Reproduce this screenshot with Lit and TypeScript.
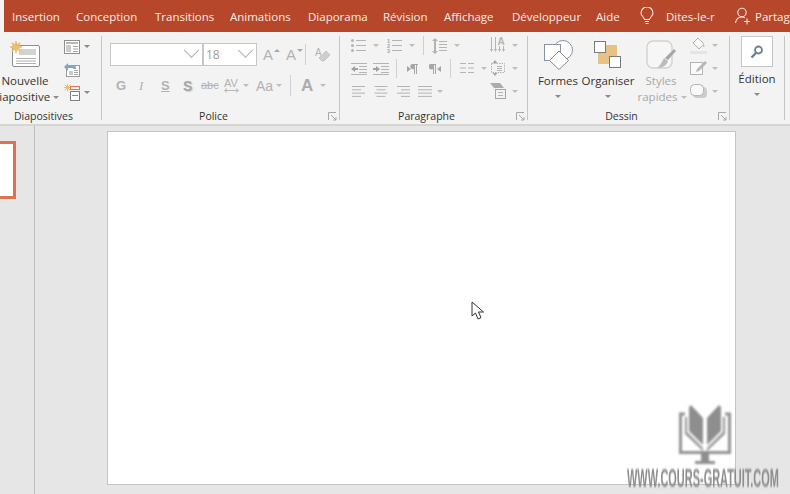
import { LitElement, html, svg, css } from "lit";
import { customElement } from "lit/decorators.js";

const G = "#b4b4b4";
const D = "#a6a6a6";

const caret = () => html`<span class="caret"></span>`;

const lines = (x: number, y: number, w: number, n: number, step: number, c = G) =>
  Array.from({ length: n }, (_, i) => svg`<rect x=${x} y=${y + i * step} width=${w} height="1" fill=${c}></rect>`);

const sun = (x: number, y: number, r: number, sw = 1.6) => svg`
  <g stroke="#ecbd6e" stroke-width=${sw} fill="none">
    <circle cx=${x} cy=${y} r=${r}></circle>
    ${[0, 45, 90, 135].map(a => svg`<line x1=${x - (r + 3) * Math.cos(a * Math.PI / 180)} y1=${y - (r + 3) * Math.sin(a * Math.PI / 180)}
      x2=${x + (r + 3) * Math.cos(a * Math.PI / 180)} y2=${y + (r + 3) * Math.sin(a * Math.PI / 180)}></line>`)}
  </g>`;

const newSlide = html`<svg width="30" height="27" viewBox="0 0 30 27">
  <rect x="2.5" y="4.5" width="27" height="21" rx="1.5" fill="#fff" stroke="#8f8f8f"></rect>
  <rect x="9" y="8" width="17" height="6" fill="#d2d2d2"></rect>
  ${lines(6, 17, 20, 3, 2.5, "#b0b0b0")}
  ${sun(6, 6, 3)}
</svg>`;

const layoutIcon = html`<svg width="16" height="14" viewBox="0 0 16 14">
  <rect x=".5" y=".5" width="15" height="13" fill="#fff" stroke="#8f8f8f"></rect>
  <rect x="2" y="2" width="12" height="2" fill="#b8b8b8"></rect>
  <rect x="2" y="5" width="5" height="7" fill="#cacaca"></rect>
  ${lines(9, 6, 5, 3, 2.5, "#a8a8a8")}
</svg>`;

const resetIcon = html`<svg width="16" height="15" viewBox="0 0 16 15">
  <rect x="2.5" y="3.5" width="13" height="11" fill="#fff" stroke="#9a9a9a"></rect>
  <rect x="5" y="9" width="4" height="4" fill="#cacaca"></rect>
  ${lines(10, 8, 4, 3, 2, "#a8a8a8")}
  <path d="M0 5l4-4v2h5a3 3 0 0 1 3 3v1H9V6H4v3z" fill="#85a5c6"></path>
</svg>`;

const sectionIcon = html`<svg width="16" height="17" viewBox="0 0 16 17">
  ${sun(3.5, 3.5, 1, 1)}
  <rect x="6.500" y="2.500" width="9" height="3" fill="none" stroke="#d8775a"></rect>
  <rect x="6.500" y="7.500" width="9" height="9" fill="#fff" stroke="#7f7f7f"></rect>
  <rect x="8" y="11" width="6" height="1" fill="#8a8a8a"></rect>
</svg>`;

const eraser = html`<svg width="16" height="16" viewBox="0 0 16 16">
  <text x="0" y="9" font-size="10" font-family="Liberation Sans" fill=${G}>A</text>
  <path d="M4 11l7-7 4 4-6 6H7z" fill="#cfcfcf" stroke="#c4c4c4"></path>
</svg>`;

const bullets = html`<svg width="15" height="14" viewBox="0 0 15 14">
  ${[1, 6, 11].map(y => svg`<circle cx="1.500" cy=${y + .5} r="1.500" fill=${G}></circle><rect x="5" y=${y} width="10" height="1" fill=${G}></rect>`)}
</svg>`;

const numbered = html`<svg width="15" height="15" viewBox="0 0 15 15">
  ${["1", "2", "3"].map((n, i) => svg`<text x="0" y=${4.5 + i * 5} font-size="5.500" font-family="Liberation Sans" font-weight="700" fill=${D}>${n}</text><rect x="5" y=${2 + i * 5} width="10" height="1" fill=${G}></rect>`)}
</svg>`;

const lineSpacing = html`<svg width="15" height="16" viewBox="0 0 15 16">
  <path d="M3 0l3 3H4v10h2l-3 3-3-3h2V3H0z" fill=${G}></path>
  ${lines(7, 3, 8, 4, 3)}
</svg>`;

const textDir = html`<svg width="16" height="16" viewBox="0 0 16 16">
  <path d="M1 0h1v12h1l-1.500 3L0 12h1zM5 0h1v12h1l-1.500 3L4 12h1zM9 9h1v3h1l-1.500 3L8 12h1zM13 9h1v3h1l-1.500 3L12 12h1z" fill=${G}></path>
  <text x="7.500" y="8" font-size="10" font-family="Liberation Sans" font-weight="700" fill=${G}>A</text>
</svg>`;

const indent = (flip: boolean) => html`<svg width="16" height="12" viewBox="0 0 16 12">
  ${lines(0, 0, 16, 1, 1)}
  ${lines(8, 3, 8, 3, 3)}
  <rect x="0" y="11" width="16" height="1" fill=${G}></rect>
  <path d=${flip ? "M7 6L3 3v2H0v2h3v2z" : "M0 6l4-3v2h3v2H4v2z"} fill="#a0a0a0"></path>
</svg>`;

const pilcrow = (flip: boolean) => html`<svg width="12" height="10" viewBox="0 0 12 10">
  <path d=${flip ? "M1 0h6v10H6V1H5v9H4V5a2.500 2.500 0 0 1-3-5zM8 5l4-3v6z" : "M5 0h6v1h-1v9H9V1H8v9H7V5a2.500 2.500 0 0 1-2-5zM0 2l4 3-4 3z"} fill=${D}></path>
</svg>`;

const columns = html`<svg width="14" height="11" viewBox="0 0 14 11">
  ${lines(0, 0, 6, 3, 4.500)}${lines(8, 0, 6, 3, 4.500)}
</svg>`;

const alignText = html`<svg width="16" height="16" viewBox="0 0 16 16">
  <rect x="1.500" y="3.500" width="13" height="9" fill="none" stroke=${G} stroke-dasharray="1.500 1"></rect>
  ${lines(7, 6, 5, 3, 2)}
  <path d="M5 0l2.500 3h-5zM5 16l2.500-3h-5z" fill=${D}></path>
</svg>`;

const smartArt = html`<svg width="16" height="16" viewBox="0 0 16 16">
  <path d="M0 0h10l4 5H4z" fill="#ababab"></path>
  <rect x="5.500" y="6.500" width="10" height="9" fill="#f3f3f3" stroke=${D}></rect>
  ${lines(8, 9, 5, 2, 3)}
</svg>`;

const align = (mode: string) => {
  const rows = [13, 9, 13, 9];
  return html`<svg width="14" height="11" viewBox="0 0 14 11">
    ${rows.map((w, i) => {
      const wd = mode === "j" ? 14 : w;
      const x = mode === "r" ? 14 - wd : mode === "c" ? (14 - wd) / 2 : 0;
      return svg`<rect x=${x} y=${i * 3.300} width=${wd} height="1" fill=${G}></rect>`;
    })}
  </svg>`;
};

const kerning = html`<svg width="15" height="5" viewBox="0 0 15 5">
  <path d="M.5 2.500h14M3 .5L.5 2.500 3 4.500M12 .5l2.500 2L12 4.500" fill="none" stroke="#b8b8b8"></path>
</svg>`;

const formes = html`<svg width="31" height="30" viewBox="0 0 31 30">
  <circle cx="20" cy="10" r="9.500" fill="#fff" stroke="#8a93a3"></circle>
  <rect x="1.500" y="4.500" width="16" height="16" fill="#fff" stroke="#8a93a3"></rect>
  <path d="M16 11l9.500 9.500-9.500 9-9.500-9z" fill="#fff" stroke="#858585"></path>
</svg>`;

const organiser = html`<svg width="28" height="28" viewBox="0 0 28 28">
  <rect x="4" y="4" width="19" height="19" fill="#e6c285"></rect>
  <rect x=".5" y=".5" width="11" height="11" fill="#fff" stroke="#7a7a7a"></rect>
  <rect x="15.500" y="15.500" width="11" height="11" fill="#fff" stroke="#7a7a7a"></rect>
</svg>`;

const styles = html`<svg width="30" height="30" viewBox="0 0 30 30">
  <rect x="1" y="1" width="25" height="27" rx="6" fill="#f6f6f6" stroke="#d2d2d2" stroke-width="1.400"></rect>
  <path d="M28 9l2 2-8 9-3-2z" fill="#a6a6a6"></path>
  <path d="M18 18l4 3c-1 4-5 7-11 7 3-2 5-6 7-10z" fill="#bcbcbc"></path>
</svg>`;

const fillIcon = html`<svg width="17" height="17" viewBox="0 0 17 17">
  <path d="M8 1l6 6-5 5-6-6z" fill="#fafafa" stroke="#b4b4b4"></path>
  <path d="M13 6l2 4h-2z" fill="#c8c8c8"></path>
  <rect x="0" y="14" width="17" height="3" fill="#e4e4e4"></rect>
</svg>`;

const penIcon = html`<svg width="17" height="15" viewBox="0 0 17 15">
  <rect x=".5" y="1.500" width="12" height="12" fill="#fafafa" stroke="#b4b4b4"></rect>
  <path d="M15 0l2 2-8 8-3 1 1-3z" fill="#b8b8b8"></path>
</svg>`;

const effectIcon = html`<svg width="17" height="15" viewBox="0 0 17 15">
  <rect x="3" y="3" width="14" height="11" rx="4" fill="#cccccc"></rect>
  <rect x=".5" y=".5" width="13" height="11" rx="4" fill="#f8f8f8" stroke="#b4b4b4"></rect>
</svg>`;

const loupe = html`<svg width="14" height="14" viewBox="0 0 14 14">
  <circle cx="8.500" cy="5" r="3.500" fill="none" stroke="#6b7f90" stroke-width="1.800"></circle>
  <path d="M6 8L1.500 12.500" stroke="#6b7f90" stroke-width="2.400"></path>
</svg>`;

const launcher = html`<svg class="launcher" width="9" height="9" viewBox="0 0 9 9">
  <path d="M.5 8V.5H8M3 3l5 5M8 5v3H5" fill="none" stroke="#a8a8a8"></path>
</svg>`;

const bulb = html`<svg width="14" height="18" viewBox="0 0 14 18">
  <path d="M4.500 12.500C4 10 1 9 1 6a6 6 0 0 1 12 0c0 3-3 4-3.500 6.500z" fill="none" stroke="#f6e6df" stroke-width="1.100"></path>
  <path d="M5 14.500h4M5.500 16.500h3" stroke="#f6e6df" stroke-width="1.100"></path>
</svg>`;

const person = html`<svg width="16" height="18" viewBox="0 0 16 18">
  <circle cx="7" cy="5.500" r="4.200" fill="none" stroke="#f6e6df" stroke-width="1.100"></circle>
  <path d="M.5 16c.5-4 3-6 6.500-6 1 0 2 .2 3 .7" fill="none" stroke="#f6e6df" stroke-width="1.100"></path>
  <path d="M12 11.500v6M9 14.500h6" stroke="#f6e6df" stroke-width="1.100"></path>
</svg>`;

const pointer = html`<svg width="15" height="20" viewBox="0 0 15 20">
  <path d="M1 1v14l3.500-3 2.500 6 3-1.300-2.500-5.700h5z" fill="#fff" stroke="#333" stroke-linejoin="round"></path>
</svg>`;

const watermark = html`<svg width="54" height="61" viewBox="0 0 54 61">
  <path d="M7 9H2.500v38.500h49V9H47" fill="none" stroke="#929292" stroke-width="3"></path>
  <path d="M13 0l12 13v27L11 26V2zM41 0L29 13v27l14-14V2z" fill="#8e8e8e"></path>
  <path d="M7 12h2v15l16 16v3L7 29zM47 12h-2v15L29 43v3l18-17z" fill="#929292"></path>
  <path d="M23 47h8v9h6v3H17v-3h6z" fill="#8e8e8e"></path>
</svg>`;

@customElement("app-root")
export class AppRoot extends LitElement {
  static styles = css`
    :host {
      display: block;
      width: 790px;
      height: 494px;
      overflow: hidden;
      position: relative;
      background: #e6e6e6;
      font-family: "Open Sans", "Liberation Sans", sans-serif;
    }
    svg { display: block; flex: none; }

    .tabs {
      display: flex;
      align-items: center;
      height: 32px;
      background: #b7472a;
      color: #f8ece7;
      font-size: 11.5px;
      white-space: nowrap;
      overflow: hidden;
    }
    .active { width: 4px; height: 32px; background: #f3f3f3; flex: none; }
    .tab { width: 64px; flex: none; }
    .t1 { margin-left: 8px; width: 64px; }
    .t2 { width: 79px; }
    .t3 { width: 75px; }
    .t4 { width: 78px; }
    .t5 { width: 75px; }
    .t6 { width: 61px; }
    .t7 { width: 68px; }
    .t8 { width: 84px; }
    .t9 { width: 44px; }
    .t10 { width: 26px; }
    .t11 { width: 69px; }
    .t12 { width: 20px; }

    .ribbon {
      display: flex;
      height: 94px;
      box-sizing: border-box;
      padding-top: 4px;
      background: #f3f3f3;
      border-bottom: 2px solid #d6d6d6;
      color: #333;
      font-size: 11.5px;
    }
    .group {
      display: flex;
      flex-direction: column;
      flex: none;
      height: 84px;
      box-sizing: border-box;
      border-right: 1px solid #c6c6c6;
    }
    .body { height: 76px; display: flex; }
    .label {
      height: 8px;
      line-height: 8px;
      display: flex;
      align-items: center;
      font-size: 10.5px;
    }
    .label span { flex: 1; text-align: center; white-space: nowrap; }
    .launcher { margin-right: 2px; margin-left: 3px; }
    .slot { width: 14px; flex: none; }

    .caret {
      display: inline-block;
      width: 0;
      height: 0;
      border: 3px solid transparent;
      border-top: 3px solid #8a8a8a;
      border-bottom: 0;
      flex: none;
    }
    .off .caret { border-top-color: #bdbdbd; }

    .g-slides { width: 102px; }
    .big {
      width: 50px;
      flex: none;
      display: flex;
      flex-direction: column;
      align-items: center;
      line-height: 16px;
      white-space: nowrap;
    }
    .big .pic { height: 37px; display: flex; align-items: center; justify-content: center; }
    .inline-caret { display: flex; align-items: center; gap: 3px; }
    .small-col {
      margin-left: 14px;
      display: flex;
      flex-direction: column;
      gap: 8px;
      padding-top: 3px;
    }
    .small-col > div { display: flex; align-items: center; gap: 4px; height: 15px; }

    .g-font { width: 238px; }
    .font-col { display: flex; flex-direction: column; padding: 7px 0 0 8px; }
    .r1 { display: grid; grid-template-columns: 93px 54px 6px 23px 19px 10px 16px; align-items: center; height: 23px; }
    .combo {
      height: 23px;
      box-sizing: border-box;
      border: 1px solid #c6c6c6;
      background: #fff;
      display: flex;
      align-items: center;
      justify-content: space-between;
      padding: 0 2px;
      color: #a59a94;
      font-size: 12px;
    }
    .chev {
      width: 10px;
      height: 10px;
      border-right: 1px solid #b0b0b0;
      border-bottom: 1px solid #b0b0b0;
      transform: rotate(45deg) translate(-3px, -3px);
      margin-right: 3px;
    }
    .fnt { font-family: "Liberation Sans", sans-serif; color: #b2b2b2; font-size: 15px; line-height: 1; }
    .up { display: flex; align-items: flex-start; gap: 1px; }
    .tri { margin-top: 2px; border: 3px solid transparent; border-bottom: 3px solid #a8a8a8; border-top: 0; width: 0; height: 0; }
    .tri.down { border-top: 3px solid #a8a8a8; border-bottom: 0; }
    .vsep { width: 1px; height: 21px; background: #d0d0d0; }
    .r2 {
      display: grid;
      grid-template-columns: 23px 22px 22px 18px 23px 19px 13px 20px 14px 11px 19px 6px;
      align-items: center;
      height: 20px;
      margin: 9px 0 0 6px;
    }
    .bold { font-weight: 700; font-size: 13px; }
    .ital { font-style: italic; font-size: 13px; font-family: "Liberation Serif", serif; }
    .und { font-weight: 700; font-size: 13px; text-decoration: underline; }
    .shad { font-weight: 700; font-size: 14px; text-shadow: 1px 1px 1px #cfcfcf; color: #a6a6a6; }
    .abc { font-size: 11px; text-decoration: line-through; }
    .av { font-size: 11px; display: flex; flex-direction: column; align-items: flex-start; line-height: 10px; }
    .aa { font-size: 14px; }
    .big-a { font-size: 17px; font-weight: 700; color: #ababab; }

    .g-para { width: 188px; }
    .para { padding-left: 11px; }
    .p-left { width: 139px; flex: none; display: flex; flex-direction: column; margin-top: -2px; }
    .p-right {
      display: flex;
      flex-direction: column;
      padding-top: 1px;
      gap: 7px;
    }
    .p-right > div { display: flex; align-items: center; gap: 6px; height: 16px; }
    .p-row { display: flex; align-items: center; height: 23px; }
    .p-row .caret { margin-left: 7px; }
    .m1 { margin-left: 8px; }
    .m2 { margin-left: 6px; }
    .m3 { margin-left: 10px; }
    .m4 { margin-left: 7px; }
    .m5 { margin-left: 9px; }
    .p-row .vsep { height: 19px; }
    .p3-gap { gap: 8px; padding-left: 1px; }
    .p3-gap .caret { margin-left: -3px; }

    .g-draw { width: 202px; }
    .dbtn {
      flex: none;
      display: flex;
      flex-direction: column;
      align-items: center;
      line-height: 16px;
      white-space: nowrap;
    }
    .dbtn .pic { height: 37px; display: flex; align-items: center; }
    .dbtn > .caret { margin-top: 6px; }
    .d1 { width: 50px; margin-left: 5px; }
    .d2 { width: 50px; }
    .d3 { width: 44px; margin-left: 6px; color: #a8a8a8; }
    .d3 .inline-caret { margin-right: -2px; }
    .d4 {
      margin-left: 7px;
      display: flex;
      flex-direction: column;
      gap: 6px;
      padding-top: 1px;
    }
    .d4 > div { display: flex; align-items: center; gap: 5px; height: 17px; }

    .g-edit { width: 55px; display: flex; flex-direction: column; align-items: center; line-height: 16px; }
    .find {
      width: 32px;
      height: 31px;
      box-sizing: border-box;
      background: #fff;
      border: 1px solid #c6c6c6;
      display: flex;
      align-items: center;
      justify-content: center;
      margin-bottom: 4px;
    }
    .g-edit .caret { margin-top: 6px; }

    .work { display: flex; height: 368px; }
    .side { width: 34px; flex: none; border-right: 1px solid #bdbdbd; }
    .thumb {
      width: 16px;
      height: 58px;
      margin-top: 15px;
      box-sizing: border-box;
      background: #fff;
      border: 3px solid #db7350;
      border-left: 0;
    }
    .slide {
      width: 629px;
      height: 354px;
      margin: 5px 0 0 72px;
      box-sizing: border-box;
      background: #fff;
      border: 1px solid #c4c4c4;
    }

    .pointer { position: absolute; left: 471px; top: 301px; }
    .mark-icon { position: absolute; left: 678px; top: 405px; filter: blur(0.9px); }
    .mark-text {
      position: absolute;
      left: 627px;
      top: 466px;
      font: 700 25px/25px "Liberation Sans", sans-serif;
      color: #8c8c8c;
      white-space: nowrap;
      transform-origin: 0 0;
      transform: scaleX(0.438);
      filter: blur(0.8px);
    }
  `;

  render() {
    return html`
      <div class="tabs">
        <div class="active"></div>
        <div class="tab t1">Insertion</div>
        <div class="tab t2">Conception</div>
        <div class="tab t3">Transitions</div>
        <div class="tab t4">Animations</div>
        <div class="tab t5">Diaporama</div>
        <div class="tab t6">Révision</div>
        <div class="tab t7">Affichage</div>
        <div class="tab t8">Développeur</div>
        <div class="tab t9">Aide</div>
        <div class="tab t10">${bulb}</div>
        <div class="tab t11">Dites-le-r</div>
        <div class="tab t12">${person}</div>
        <div class="tab">Partager</div>
      </div>

      <div class="ribbon">
        <section class="group g-slides">
          <div class="body">
            <div class="big">
              <div class="pic">${newSlide}</div>
              <div>Nouvelle</div>
              <div class="inline-caret">Diapositive${caret()}</div>
            </div>
            <div class="small-col">
              <div>${layoutIcon}${caret()}</div>
              <div>${resetIcon}</div>
              <div>${sectionIcon}${caret()}</div>
            </div>
          </div>
          <div class="label"><span>Diapositives</span><div class="slot"></div></div>
        </section>

        <section class="group g-font">
          <div class="body">
            <div class="font-col off">
              <div class="r1">
                <div class="combo"><span></span><div class="chev"></div></div>
                <div class="combo"><span>18</span><div class="chev"></div></div>
                <span></span>
                <div class="fnt up">A<div class="tri"></div></div>
                <div class="fnt up">A<div class="tri down"></div></div>
                <div class="vsep"></div>
                ${eraser}
              </div>
              <div class="r2">
                <span class="fnt bold">G</span>
                <span class="fnt ital">I</span>
                <span class="fnt und">S</span>
                <span class="fnt shad">S</span>
                <span class="fnt abc">abc</span>
                <span class="fnt av">AV${kerning}</span>
                ${caret()}
                <span class="fnt aa">Aa</span>
                ${caret()}
                <div class="vsep"></div>
                <span class="fnt big-a">A</span>
                ${caret()}
              </div>
            </div>
          </div>
          <div class="label"><span>Police</span>${launcher}</div>
        </section>

        <section class="group g-para">
          <div class="body para off">
            <div class="p-left">
              <div class="p-row">
                ${bullets}${caret()}<span class="m1"></span>${numbered}${caret()}
                <span class="m1"></span><div class="vsep"></div><span class="m1"></span>
                ${lineSpacing}${caret()}
              </div>
              <div class="p-row">
                ${indent(false)}<span class="m2"></span>${indent(true)}
                <span class="m4"></span><div class="vsep"></div><span class="m3"></span>
                ${pilcrow(false)}<span class="m3"></span>${pilcrow(true)}
                <span class="m5"></span><div class="vsep"></div><span class="m5"></span>
                ${columns}${caret()}
              </div>
              <div class="p-row p3-gap">
                ${align("l")}${align("c")}${align("r")}${align("j")}${caret()}
              </div>
            </div>
            <div class="p-right">
              <div>${textDir}${caret()}</div>
              <div>${alignText}${caret()}</div>
              <div>${smartArt}${caret()}</div>
            </div>
          </div>
          <div class="label"><span>Paragraphe</span>${launcher}</div>
        </section>

        <section class="group g-draw">
          <div class="body">
            <div class="dbtn d1"><div class="pic">${formes}</div><div>Formes</div><div class="caret"></div></div>
            <div class="dbtn d2"><div class="pic">${organiser}</div><div>Organiser</div><div class="caret"></div></div>
            <div class="dbtn d3 off"><div class="pic">${styles}</div><div>Styles</div><div class="inline-caret">rapides${caret()}</div></div>
            <div class="d4 off">
              <div>${fillIcon}${caret()}</div>
              <div>${penIcon}${caret()}</div>
              <div>${effectIcon}${caret()}</div>
            </div>
          </div>
          <div class="label"><span>Dessin</span>${launcher}</div>
        </section>

        <section class="group g-edit">
          <div class="find">${loupe}</div>
          <div>Édition</div>
          <div class="caret"></div>
        </section>
      </div>

      <div class="work">
        <div class="side"><div class="thumb"></div></div>
        <div class="slide"></div>
      </div>

      <div class="pointer">${pointer}</div>
      <div class="mark-icon">${watermark}</div>
      <div class="mark-text">WWW.COURS-GRATUIT.COM</div>
    `;
  }
}
